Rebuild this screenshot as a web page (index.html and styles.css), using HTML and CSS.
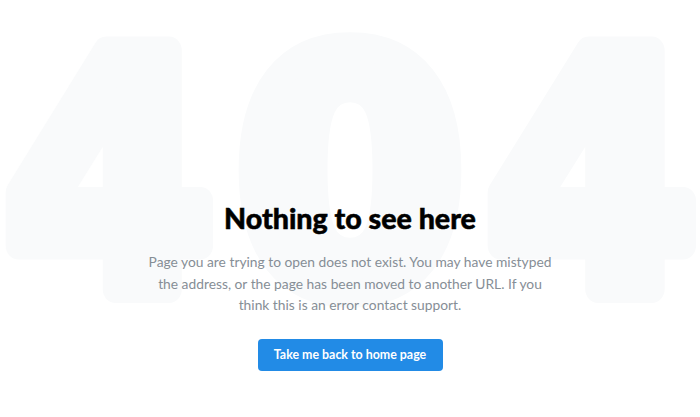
FILE: index.html
```html
<!DOCTYPE html>
<html lang="en">
<head>
<meta charset="utf-8">
<title>Nothing to see here</title>
<link rel="stylesheet" href="styles.css">
</head>
<body>
<main class="page">
  <svg class="bg-digits" viewBox="0 0 700 417" width="700" height="417" aria-hidden="true">
    <text class="digit" x="5" y="289" textLength="209" lengthAdjust="spacingAndGlyphs">4</text>
    <text class="digit" x="237" y="289" textLength="226" lengthAdjust="spacingAndGlyphs">0</text>
    <text class="digit" x="487" y="289" textLength="210" lengthAdjust="spacingAndGlyphs">4</text>
  </svg>
  <section class="content">
    <h1 class="title">Nothing to see here</h1>
    <p class="desc">Page you are trying to open does not exist. You may have mistyped the address, or the page has been moved to another URL. If you think this is an error contact support.</p>
    <div class="actions">
      <button class="btn" type="button">Take me back to home page</button>
    </div>
  </section>
</main>
</body>
</html>
```

FILE: styles.css
```css
html, body {
  margin: 0;
  padding: 0;
  background: #ffffff;
}

.page {
  position: relative;
  width: 700px;
  height: 417px;
  overflow: hidden;
}

.bg-digits {
  position: absolute;
  left: 0;
  top: 0;
  display: block;
}

.digit {
  font-family: "DejaVu Sans", sans-serif;
  font-weight: 700;
  font-size: 327px;
  fill: #f9fafb;
  stroke: #f9fafb;
  stroke-width: 28px;
  stroke-linejoin: round;
}

.content {
  position: relative;
  z-index: 1;
  display: flex;
  flex-direction: column;
  align-items: center;
  padding-top: 198px;
}

.title {
  margin: 0;
  font-family: "Lato", "Inter", sans-serif;
  font-weight: 900;
  font-size: 28.6px;
  line-height: 40px;
  color: #000000;
  text-align: center;
  -webkit-text-stroke: 0.5px #000000;
}

.desc {
  margin: 13px 0 0;
  width: 410px;
  font-family: "Lato", "Open Sans", sans-serif;
  font-size: 13.8px;
  line-height: 21.5px;
  color: #868e96;
  text-align: center;
}

.actions {
  margin-top: 23px;
}

.btn {
  display: block;
  width: 185px;
  height: 32px;
  padding: 0;
  border: 0;
  border-radius: 4px;
  background: #228be6;
  color: #ffffff;
  font-family: "Lato", "Open Sans", sans-serif;
  font-weight: 700;
  font-size: 12.4px;
}
```
